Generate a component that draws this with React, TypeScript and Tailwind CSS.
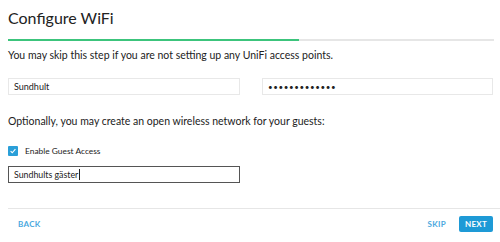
export default function App() {
  return (
    <div
      className="w-[500px] h-[242px] bg-white text-[#222] overflow-hidden"
      style={{ fontFamily: 'Lato, "Open Sans", sans-serif' }}
    >
      <div className="pl-[8px] pr-[6px]">
        <h1 className="pt-[7px] text-[16px] leading-[22px] text-[#222]">Configure WiFi</h1>

        <div className="mt-[10px] flex h-[2px] w-[486px] bg-[#e6e6e6]">
          <div className="h-full w-[291px] bg-[#3cc47c]" />
        </div>

        <p className="mt-[7px] text-[10.5px] leading-[14px]">
          You may skip this step if you are not setting up any UniFi access points.
        </p>

        <div className="mt-[16px] flex gap-[23px]">
          <input
            readOnly
            value="Sundhult"
            className="h-[17px] w-[232px] border border-[#e8e8e8] px-[5px] text-[9px] text-[#222] outline-none"
            style={{ fontFamily: 'Lato, sans-serif' }}
          />
          <input
            readOnly
            type="password"
            value="abcdefghijklm"
            className="-ml-[1px] h-[17px] w-[231px] border border-[#e8e8e8] px-[5px] text-[8px] tracking-[0.6px] text-[#222] outline-none"
            style={{ fontFamily: 'Lato, sans-serif' }}
          />
        </div>

        <p className="mt-[19px] text-[10.5px] leading-[14px]">
          Optionally, you may create an open wireless network for your guests:
        </p>

        <label className="mt-[17px] flex items-center gap-[7px]">
          <span className="flex h-[10px] w-[10px] items-center justify-center rounded-[1px] bg-[#2a9fd8]">
            <svg viewBox="0 0 10 10" className="h-[8px] w-[8px]">
              <path d="M2 5.2 L4.1 7.2 L8 2.8" fill="none" stroke="white" strokeWidth="1.4" />
            </svg>
          </span>
          <span className="text-[8.4px] leading-[12px]">Enable Guest Access</span>
        </label>

        <div className="mt-[9px] flex h-[17px] w-[232px] items-center border border-[#555] px-[5px] text-[8.8px]">
          <span>Sundhults gäster</span>
          <span className="ml-[1px] h-[11px] w-px bg-[#222]" />
        </div>
      </div>

      <div className="mt-[25px] ml-[8px] border-t border-[#e6e6e6]">
        <div className="flex items-center pt-[7px] pl-[10px] pr-[7px]">
          <button className="text-[8px] font-bold tracking-[0.3px] text-[#4aa8de]">BACK</button>
          <button className="ml-auto mr-[13px] text-[8px] font-bold tracking-[0.3px] text-[#4aa8de]">
            SKIP
          </button>
          <button className="h-[16px] w-[34px] rounded-[2px] bg-[#1e9ad6] text-[8px] font-bold tracking-[0.3px] text-white">
            NEXT
          </button>
        </div>
      </div>
    </div>
  );
}
